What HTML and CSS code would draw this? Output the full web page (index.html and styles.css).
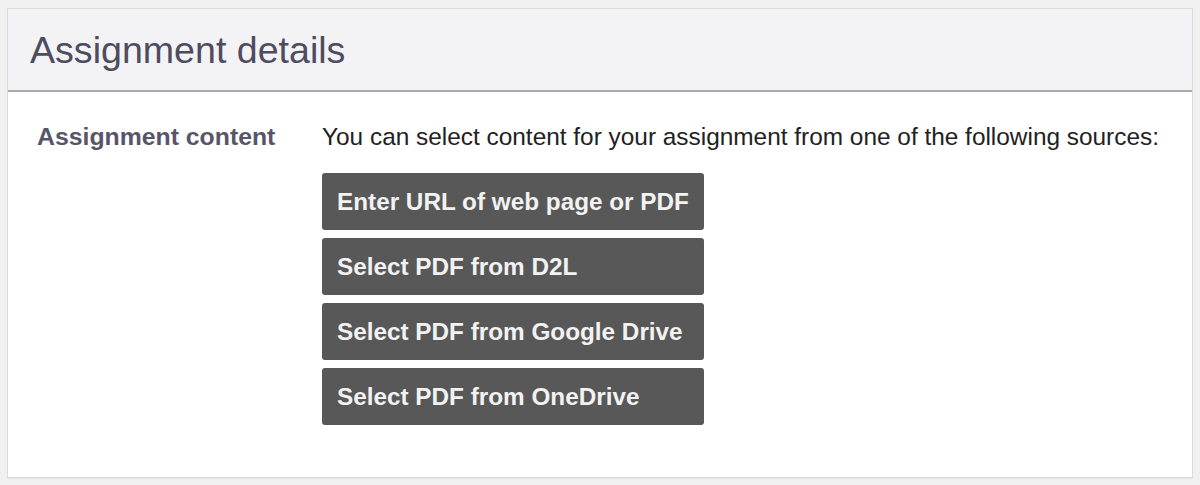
FILE: index.html
```html
<!DOCTYPE html>
<html lang="en">
<head>
<meta charset="utf-8">
<title>Assignment details</title>
<link rel="stylesheet" href="styles.css">
</head>
<body>
<section class="panel">
  <header class="panel-header">
    <h1 class="panel-title">Assignment details</h1>
  </header>
  <div class="panel-body">
    <div class="field-label">Assignment content</div>
    <div class="field-content">
      <p class="intro">You can select content for your assignment from one of the following sources:</p>
      <div class="source-list">
        <button class="source-btn" type="button">Enter URL of web page or PDF</button>
        <button class="source-btn" type="button">Select PDF from D2L</button>
        <button class="source-btn" type="button">Select PDF from Google Drive</button>
        <button class="source-btn" type="button">Select PDF from OneDrive</button>
      </div>
    </div>
  </div>
</section>
</body>
</html>
```

FILE: styles.css
```css
html, body {
  margin: 0;
  padding: 0;
}
body {
  background: #f0f0f0;
  font-family: "Liberation Sans", Arial, Helvetica, sans-serif;
  padding: 8px 7px 7px 7px;
}
.panel {
  background: #ffffff;
  border: 1px solid #dadada;
  height: 468px;
  box-shadow: 0 1px 1px rgba(0,0,0,0.04);
}
.panel-header {
  background: #f3f3f6;
  border-bottom: 2px solid #a9a7b6;
  height: 81px;
  display: flex;
  align-items: center;
  padding-left: 22px;
}
.panel-title {
  margin: 0;
  font-weight: normal;
  font-size: 37.6px;
  color: #4e4c5e;
  padding-top: 2px;
}
.panel-body {
  display: grid;
  grid-template-columns: 285px 1fr;
  padding: 31px 0 0 29px;
}
.field-label {
  font-size: 24.8px;
  font-weight: bold;
  color: #57556a;
  line-height: 28px;
}
.field-content {
  display: flex;
  flex-direction: column;
  align-items: flex-start;
}
.intro {
  margin: 0;
  font-size: 24.4px;
  line-height: 28px;
  color: #222222;
}
.source-list {
  display: inline-grid;
  grid-auto-rows: 57px;
  row-gap: 8px;
  margin-top: 22px;
}
.source-btn {
  font-family: inherit;
  font-size: 24.3px;
  font-weight: bold;
  color: #f2f2f2;
  background: #585858;
  border: none;
  border-radius: 3px;
  padding: 0 15px;
  text-align: left;
  cursor: pointer;
}
```
